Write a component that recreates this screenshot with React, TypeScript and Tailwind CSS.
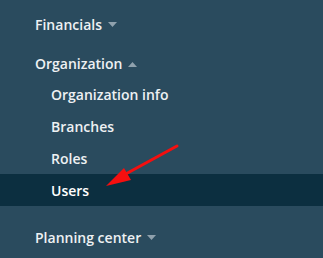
import { Fragment } from 'react';

const Caret = ({ up }: { up?: boolean }) => (
  <svg width="9" height="5" viewBox="0 0 9 5" className="ml-[6px] mt-[1px]">
    <path d={up ? 'M0 5 L4.5 0 L9 5 Z' : 'M0 0 L9 0 L4.5 5 Z'} fill="#8fa1ad" />
  </svg>
);

const SUB = ['Organization info', 'Branches', 'Roles', 'Users'];

export default function App() {
  return (
    <div className="relative w-[323px] h-[258px] bg-[#2a4b5e] text-[#eef1f3] text-[14px] font-semibold overflow-hidden"
      style={{ fontFamily: '"Open Sans", Lato, sans-serif' }}>
      <div className="flex flex-col pt-[9px]">
        <div className="flex items-center h-[30px] pl-[35px]">
          Financials <Caret />
        </div>
        <div className="flex items-center h-[29px] pl-[35px] mt-[10px]">
          Organization <Caret up />
        </div>
        {SUB.map(s => (
          <Fragment key={s}>
            <div className={`flex items-center h-[32px] pl-[51px] ${s === 'Users' ? 'bg-[#0c2f40] text-white' : ''}`}>
              {s}
            </div>
          </Fragment>
        ))}
        <div className="flex items-center h-[30px] pl-[35px] mt-[16px]">
          Planning center <Caret />
        </div>
      </div>

      {/* red annotation arrow */}
      <svg className="absolute left-0 top-0" width="323" height="258" viewBox="0 0 323 258">
        <line x1="177" y1="146" x2="122" y2="176" stroke="#f50f0f" strokeWidth="3" strokeLinecap="round" />
        <path d="M106 186 L124 168 L131 180 Z" fill="#f50f0f" />
      </svg>
    </div>
  );
}
